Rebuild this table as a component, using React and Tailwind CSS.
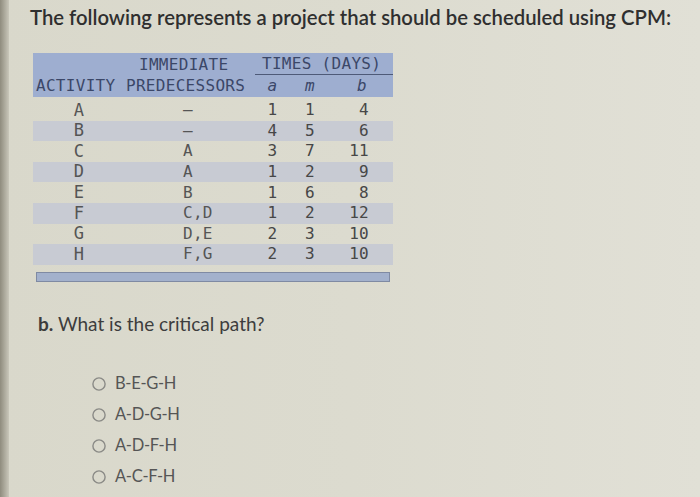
const rows = [
  { act: "A", pred: "—", a: "1", m: "1", b: "4" },
  { act: "B", pred: "—", a: "4", m: "5", b: "6" },
  { act: "C", pred: "A", a: "3", m: "7", b: "11" },
  { act: "D", pred: "A", a: "1", m: "2", b: "9" },
  { act: "E", pred: "B", a: "1", m: "6", b: "8" },
  { act: "F", pred: "C,D", a: "1", m: "2", b: "12" },
  { act: "G", pred: "D,E", a: "2", m: "3", b: "10" },
  { act: "H", pred: "F,G", a: "2", m: "3", b: "10" },
];

const options = ["B-E-G-H", "A-D-G-H", "A-D-F-H", "A-C-F-H"];

const mono = { fontFamily: '"DejaVu Sans Mono", "Liberation Mono", monospace' };

function Radio() {
  return (
    <svg width="14" height="14" viewBox="0 0 14 14" className="shrink-0">
      <circle cx="7" cy="7" r="6.1" fill="none" stroke="#8a8a86" strokeWidth="1.4" />
    </svg>
  );
}

export default function App() {
  return (
    <div className="flex w-[700px] h-[497px] overflow-hidden bg-gradient-to-r from-[#d9d8cb] via-[#dcdbcf] to-[#e1e0d6]">
      {/* dark bezel strip on the left */}
      <div className="w-[9px] shrink-0 bg-gradient-to-r from-[#8f8c7e] to-[#c9c7ba]" />

      <div className="flex-1 flex flex-col pl-[21px]" style={{ fontFamily: 'Lato, "Open Sans", sans-serif' }}>
        <h1 className="mt-[4px] text-[20.3px] leading-[26px] font-semibold text-[#2f2f2f]">
          The following represents a project that should be scheduled using CPM:
        </h1>

        {/* CPM table */}
        <div className="mt-[23px] ml-[3px] w-[360px] text-[16px] tracking-[0.3px]" style={mono}>
          <div className="bg-[#9eaed0] text-[#3b4768]">
            <div className="flex h-[22px] items-end">
              <div className="w-[92px]" />
              <div className="w-[130px] pl-[14px] leading-[20px]">IMMEDIATE</div>
              <div className="w-[138px] pl-[7px] leading-[20px] border-b-[1.5px] border-[#4e5a78]">TIMES (DAYS)</div>
            </div>
            <div className="flex h-[22px] items-center">
              <div className="w-[92px] pl-[3px]">ACTIVITY</div>
              <div className="w-[130px] pl-[1px]">PREDECESSORS</div>
              <div className="w-[35px] text-center italic">a</div>
              <div className="w-[40px] text-center italic">m</div>
              <div className="w-[63px] text-right pr-[26px] italic">b</div>
            </div>
          </div>

          <div className="pt-[3px]">
            {rows.map((r, i) => (
              <div
                key={r.act}
                className={`flex h-[20.6px] items-center text-[#474747] ${i % 2 === 1 ? "bg-[#c8cbd3]" : ""}`}
              >
                <div className="w-[92px] text-center text-[#555] text-[17px]">{r.act}</div>
                <div className="w-[130px] pl-[58px] text-[#555]">{r.pred}</div>
                <div className="w-[35px] text-center">{r.a}</div>
                <div className="w-[40px] text-center">{r.m}</div>
                <div className="w-[63px] text-right pr-[24px]">{r.b}</div>
              </div>
            ))}
          </div>

          <div className="mt-[7px] ml-[3px] w-[354px] h-[10px] bg-[#a3b1cc] border border-[#7f8aa3]" />
        </div>

        <p className="mt-[28px] ml-[8px] text-[19px] text-[#3d3d3d]">
          <span className="font-bold">b.</span> What is the critical path?
        </p>

        <div className="mt-[36px] ml-[62px] flex flex-col gap-[12.5px]">
          {options.map((o) => (
            <label key={o} className="flex items-center gap-[9px] h-[18.5px] text-[16.5px] text-[#555] tracking-[-0.3px]">
              <Radio />
              {o}
            </label>
          ))}
        </div>
      </div>
    </div>
  );
}
